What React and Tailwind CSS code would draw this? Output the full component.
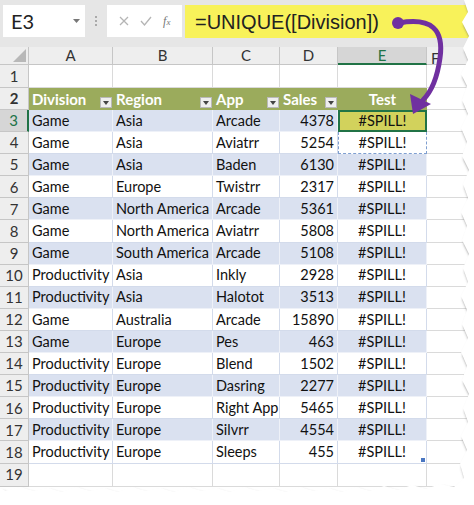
import React from "react";

const rows = [
    ["Game", "Asia", "Arcade", 4378],
    ["Game", "Asia", "Aviatrr", 5254],
    ["Game", "Asia", "Baden", 6130],
    ["Game", "Europe", "Twistrr", 2317],
    ["Game", "North America", "Arcade", 5361],
    ["Game", "North America", "Aviatrr", 5808],
    ["Game", "South America", "Arcade", 5108],
    ["Productivity", "Asia", "Inkly", 2928],
    ["Productivity", "Asia", "Halotot", 3513],
    ["Game", "Australia", "Arcade", 15890],
    ["Game", "Europe", "Pes", 463],
    ["Productivity", "Europe", "Blend", 1502],
    ["Productivity", "Europe", "Dasring", 2277],
    ["Productivity", "Europe", "Right App", 5465],
    ["Productivity", "Europe", "Silvrr", 4554],
    ["Productivity", "Europe", "Sleeps", 455],
];

// widths of row header + columns A..E
const W = {h: "w-[29px]", a: "w-[84px]", b: "w-[100px]", c: "w-[67px]", d: "w-[58px]", e: "w-[89px]"};

function Filter() {
    return (
        <span className="absolute right-[1px] bottom-[2px] w-[12px] h-[11px] bg-[#eeeeee] border border-[#b9b9b9] flex items-center justify-center">
            <svg width="6" height="4" viewBox="0 0 6 4"><path d="M0 0h6L3 4z" fill="#444"/></svg>
        </span>
    );
}

function RowHead({n, active}) {
    return (
        <div className={`${W.h} shrink-0 h-full flex items-center justify-center text-[15px] border-r border-b ${active ? "bg-[#d6d6d6] text-[#217346] border-r-2 border-r-[#217346] border-b-[#c6c6c6]" : "bg-[#eeeeee] text-[#333] border-[#c6c6c6]"}`}>
            {n}
        </div>
    );
}

export default function App() {
    return (
        <div className="relative w-[474px] h-[505px] bg-white overflow-hidden text-[#111] whitespace-nowrap" style={{fontFamily: "Lato, 'Liberation Sans', sans-serif"}}>
            {/* formula bar */}
            <div className="h-[47px] bg-[#e6e6e6] flex items-start pt-[5px] pl-[3px]">
                <div className="w-[82px] h-[32px] bg-white flex items-center pl-[8px] pr-[5px] text-[20px] text-[#222]">
                    <span className="flex-1">E3</span>
                    <svg width="7" height="4" viewBox="0 0 7 4"><path d="M0 0h7L3.5 4z" fill="#777"/></svg>
                </div>
                <div className="w-[22px] h-[32px] flex flex-col items-center justify-center gap-[2px]">
                    <span className="w-[2px] h-[2px] bg-[#aaa]"/>
                    <span className="w-[2px] h-[2px] bg-[#aaa]"/>
                    <span className="w-[2px] h-[2px] bg-[#aaa]"/>
                </div>
                <div className="w-[75px] h-[32px] bg-white flex items-center justify-around px-[6px]">
                    <svg width="10" height="10" viewBox="0 0 10 10"><path d="M1 1l8 8M9 1l-8 8" stroke="#b5b5b5" strokeWidth="1.3"/></svg>
                    <svg width="12" height="10" viewBox="0 0 12 10"><path d="M1 5l3.5 4L11 1" stroke="#b5b5b5" strokeWidth="1.3" fill="none"/></svg>
                    <span className="italic text-[12px] text-[#777]" style={{fontFamily: "'Liberation Serif', serif"}}>f<span className="text-[9px]">x</span></span>
                </div>
                <div className="ml-[3px] flex-1 h-[33px] bg-[#f8f25a] flex items-center pl-[10px] text-[20px] text-[#222]" style={{fontFamily: "'Liberation Sans', sans-serif"}}>
                    =UNIQUE([Division])
                </div>
            </div>

            {/* column headers */}
            <div className="flex h-[18px] text-[15px] text-[#333]">
                <div className={`${W.h} shrink-0 bg-[#eeeeee] border-r border-b border-[#c6c6c6] relative`}>
                    <svg className="absolute right-[2px] bottom-[2px]" width="13" height="13" viewBox="0 0 13 13"><path d="M13 0v13H0z" fill="#b8b8b8"/></svg>
                </div>
                {[["A", W.a], ["B", W.b], ["C", W.c], ["D", W.d]].map(([l, w]) => (
                    <div key={l} className={`${w} shrink-0 bg-[#eeeeee] border-r border-b border-[#c6c6c6] flex items-center justify-center`}>{l}</div>
                ))}
                <div className={`${W.e} shrink-0 bg-[#d6d6d6] border-r border-[#c6c6c6] border-b-2 border-b-[#217346] flex items-center justify-center text-[#217346]`}>E</div>
                <div className="flex-1 bg-[#eeeeee] border-b border-[#c6c6c6] pl-[4px]">F</div>
            </div>

            {/* row 1 */}
            <div className="flex h-[23px]">
                <RowHead n={1}/>
                {[W.a, W.b, W.c, W.d, W.e].map((w, i) => (
                    <div key={i} className={`${w} shrink-0 border-r border-b border-[#dadada]`}/>
                ))}
                <div className="flex-1 border-b border-[#dadada]"/>
            </div>

            {/* row 2: table header */}
            <div className="flex h-[22px] text-[15px] font-bold text-white">
                <RowHead n={2}/>
                <div className={`${W.a} shrink-0 bg-[#9bab5c] relative pl-[3px] flex items-center`}>Division<Filter/></div>
                <div className={`${W.b} shrink-0 bg-[#9bab5c] relative pl-[3px] flex items-center`}>Region<Filter/></div>
                <div className={`${W.c} shrink-0 bg-[#9bab5c] relative pl-[3px] flex items-center`}>App<Filter/></div>
                <div className={`${W.d} shrink-0 bg-[#9bab5c] relative pl-[3px] flex items-center`}>Sales<Filter/></div>
                <div className={`${W.e} shrink-0 bg-[#9bab5c] flex items-center justify-center`}>Test</div>
                <div className="flex-1 border-b border-[#dadada]"/>
            </div>

            {/* data rows */}
            {rows.map((r, i) => {
                const band = i % 2 === 0;
                const bg = band ? "bg-[#dae1f0]" : "bg-white";
                const cell = `shrink-0 border-r border-b ${band ? "border-[#eef1f8]" : "border-[#d3dbeb]"} ${bg} flex items-center text-[14.5px] overflow-visible`;
                let eCls = `${W.e} ${cell} justify-center`;
                if (i === 0) eCls = `${W.e} shrink-0 bg-[#d2d25c] border-2 border-[#217346] flex items-center justify-center text-[14.5px]`;
                if (i === 1) eCls = `${W.e} shrink-0 bg-white border border-dashed border-[#7f9fd0] border-t-0 flex items-center justify-center text-[14.5px]`;
                return (
                    <div key={i} className="flex h-[22.1px]">
                        <RowHead n={i + 3} active={i === 0}/>
                        <div className={`${W.a} ${cell} pl-[3px]`}>{r[0]}</div>
                        <div className={`${W.b} ${cell} pl-[3px]`}>{r[1]}</div>
                        <div className={`${W.c} ${cell} pl-[3px]`}>{r[2]}</div>
                        <div className={`${W.d} ${cell} justify-end pr-[3px]`}>{r[3]}</div>
                        <div className={`${eCls} relative`}>
                            #SPILL!
                            {i === rows.length - 1 && <span className="absolute right-[1px] bottom-[1px] w-[4px] h-[4px] bg-[#4a77c2]"/>}
                        </div>
                        <div className="flex-1 border-b border-[#dadada]"/>
                    </div>
                );
            })}

            {/* row 19 */}
            <div className="flex h-[23px]">
                <RowHead n={19}/>
                {[W.a, W.b, W.c, W.d, W.e].map((w, i) => (
                    <div key={i} className={`${w} shrink-0 border-r border-b border-[#dadada]`}/>
                ))}
                <div className="flex-1 border-b border-[#dadada]"/>
            </div>

            {/* arrow and torn edges */}
            <svg className="absolute inset-0 pointer-events-none" width="474" height="505" viewBox="0 0 474 505">
                <path d="M399 23 C432 17 444 30 440 58 C437 80 431 92 423 100" stroke="#7030a0" strokeWidth="5" fill="none" strokeLinecap="round"/>
                <circle cx="398" cy="23" r="6" fill="#7030a0"/>
                <path d="M413 114 L410 94 L431 104 Z" fill="#7030a0"/>
                <defs>
                    <filter id="sh" x="-20%" y="-20%" width="140%" height="140%">
                        <feGaussianBlur stdDeviation="1.6"/>
                    </filter>
                </defs>
                <path d="M474 0 L464 0 L468 12 L462 22 L469 36 L463 48 L468 60 L461 74 L467 86 L462 100 L468 114 L461 128 L467 142 L462 156 L469 170 L463 184 L468 198 L461 212 L467 226 L462 240 L469 254 L463 268 L468 282 L461 296 L467 310 L462 324 L468 338 L461 352 L467 366 L462 380 L469 394 L463 408 L468 422 L461 436 L467 450 L460 464 L464 478 L454 487 L440 484 L426 489 L412 485 L398 490 L384 486 L370 491 L356 487 L342 492 L328 488 L314 491 L300 487 L286 492 L272 488 L258 491 L244 487 L230 492 L216 488 L202 491 L188 487 L174 492 L160 488 L146 491 L132 487 L118 492 L104 488 L90 491 L76 487 L62 492 L48 488 L34 491 L20 487 L6 491 L0 488 L0 505 L474 505 Z" fill="#555" filter="url(#sh)" transform="translate(2,3)"/>
                <path d="M474 0 L464 0 L468 12 L462 22 L469 36 L463 48 L468 60 L461 74 L467 86 L462 100 L468 114 L461 128 L467 142 L462 156 L469 170 L463 184 L468 198 L461 212 L467 226 L462 240 L469 254 L463 268 L468 282 L461 296 L467 310 L462 324 L468 338 L461 352 L467 366 L462 380 L469 394 L463 408 L468 422 L461 436 L467 450 L460 464 L464 478 L454 487 L440 484 L426 489 L412 485 L398 490 L384 486 L370 491 L356 487 L342 492 L328 488 L314 491 L300 487 L286 492 L272 488 L258 491 L244 487 L230 492 L216 488 L202 491 L188 487 L174 492 L160 488 L146 491 L132 487 L118 492 L104 488 L90 491 L76 487 L62 492 L48 488 L34 491 L20 487 L6 491 L0 488 L0 505 L474 505 Z" fill="white"/>
            </svg>
        </div>
    );
}
